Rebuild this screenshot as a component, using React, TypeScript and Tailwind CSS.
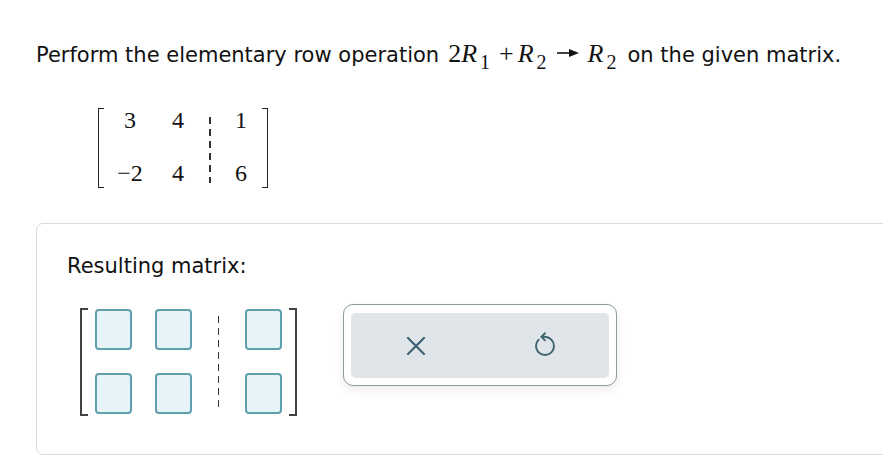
import { RotateCcw } from "lucide-react"

const serif = "font-['Liberation_Serif','Times_New_Roman',serif]"

function Cell() {
    return <div className="w-[37px] h-[41px] rounded-[4px] border-2 border-[#5f9fae] bg-[#e6f4f8]" />
}

function Dashes({ className }: { className: string }) {
    return (
        <div
            className={`w-[1.5px] bg-[repeating-linear-gradient(to_bottom,#333_0_7px,transparent_7px_12px)] ${className}`}
        />
    )
}

function GivenMatrix() {
    return (
        <div className={`flex items-stretch ${serif} text-[24px] leading-[22px] text-[#111] h-[80px]`}>
            <div className="w-[6px] border-l-[1.5px] border-t-[1.5px] border-b-[1.5px] border-[#222]" />
            <div className="flex flex-col justify-between pt-[1px] pb-[4px]">
                <div className="flex">
                    <div className="w-[52px] text-center">3</div>
                    <div className="w-[44px] text-center">4</div>
                </div>
                <div className="flex">
                    <div className="w-[52px] text-center">−2</div>
                    <div className="w-[44px] text-center">4</div>
                </div>
            </div>
            <div className="w-[20px] flex justify-center pt-[9px] pb-[5px]">
                <Dashes className="h-full" />
            </div>
            <div className="flex flex-col justify-between pt-[1px] pb-[4px] w-[42px]">
                <div className="text-center">1</div>
                <div className="text-center">6</div>
            </div>
            <div className="w-[6px] border-r-[1.5px] border-t-[1.5px] border-b-[1.5px] border-[#222]" />
        </div>
    )
}

function AnswerMatrix() {
    return (
        <div className="flex items-stretch h-[108px]">
            <div className="w-[8px] border-l-2 border-t-2 border-b-2 border-[#444]" />
            <div className="flex flex-col justify-between pt-[1px] pb-[2px] ml-[7px]">
                <div className="flex gap-[23px]">
                    <Cell />
                    <Cell />
                </div>
                <div className="flex gap-[23px]">
                    <Cell />
                    <Cell />
                </div>
            </div>
            <div className="w-[53px] flex justify-center pt-[8px] pb-[4px]">
                <Dashes className="h-full" />
            </div>
            <div className="flex flex-col justify-between pt-[1px] pb-[2px]">
                <Cell />
                <Cell />
            </div>
            <div className="w-[8px] ml-[7px] border-r-2 border-t-2 border-b-2 border-[#444]" />
        </div>
    )
}

function Sub({ children }: { children: string }) {
    return <span className="inline-block text-[20px] translate-y-[7px] ml-[3px]">{children}</span>
}

export default function App() {
    return (
        <div className="w-[883px] h-[469px] bg-white overflow-hidden font-['DejaVu_Sans',Verdana,sans-serif] text-[#111]">
            <div className="pl-[36px] pt-[42px] h-[108px] flex items-baseline text-[21px] leading-[24px] whitespace-nowrap">
                <span>Perform the elementary row operation</span>
                <span className={`${serif} text-[26px] leading-[24px] ml-[9px]`}>
                    2<i>R</i>
                    <Sub>1</Sub>
                    <span className="ml-[9px] mr-[4px]">+</span>
                    <i>R</i>
                    <Sub>2</Sub>
                    <svg width="22" height="10" viewBox="0 0 22 10" className="inline-block ml-[10px] mr-[9px] -translate-y-[3px]">
                        <path d="M0 5H16" stroke="#111" strokeWidth="1.6" />
                        <path d="M12 1L22 5L12 9Z" fill="#111" />
                    </svg>
                    <i>R</i>
                    <Sub>2</Sub>
                </span>
                <span className="ml-[11px]">on the given matrix.</span>
            </div>

            <div className="pl-[98px]">
                <GivenMatrix />
            </div>

            <div className="ml-[36px] mt-[35px] h-[232px] w-[900px] rounded-l-[7px] border border-[#d9dcdc] pl-[30px] pt-[30px]">
                <div className="text-[21px] leading-[24px]">Resulting matrix:</div>
                <div className="flex items-start mt-[30px] ml-[13px]">
                    <AnswerMatrix />
                    <div className="ml-[46px] -mt-[4px] w-[274px] h-[82px] rounded-[10px] border border-[#8d9ca2] bg-white px-[7px] pt-[8px] pb-[7px] shadow-[0_4px_10px_rgba(0,0,0,0.08)]">
                        <div className="h-full rounded-[5px] bg-[#dfe5e8] flex items-center">
                            <div className="flex-1 flex justify-center">
                                <svg width="20" height="20" viewBox="0 0 20 20" className="text-[#3c6470]">
                                    <path d="M2 2L18 18M18 2L2 18" stroke="currentColor" strokeWidth="2.2" strokeLinecap="round" />
                                </svg>
                            </div>
                            <div className="flex-1 flex justify-center">
                                <RotateCcw size={24} strokeWidth={1.9} className="text-[#3c6470] rotate-45" />
                            </div>
                        </div>
                    </div>
                </div>
            </div>
        </div>
    )
}
